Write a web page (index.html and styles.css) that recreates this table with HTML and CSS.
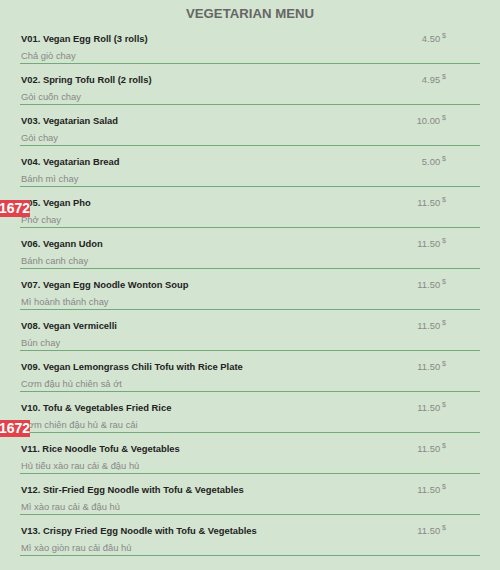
FILE: index.html
```html
<!DOCTYPE html>
<html>
<head>
<meta charset="utf-8">
<link rel="stylesheet" href="styles.css">
</head>
<body>
<div class="menu">
  <h2 class="title">VEGETARIAN MENU</h2>
  <ul class="list">
    <li class="item"><div class="info"><div class="name">V01. Vegan Egg Roll (3 rolls)</div><div class="sub">Chả giò chay</div></div><div class="price">4.50<sup>$</sup></div></li>
    <li class="item"><div class="info"><div class="name">V02. Spring Tofu Roll (2 rolls)</div><div class="sub">Gỏi cuốn chay</div></div><div class="price">4.95<sup>$</sup></div></li>
    <li class="item"><div class="info"><div class="name">V03. Vegatarian Salad</div><div class="sub">Gỏi chay</div></div><div class="price">10.00<sup>$</sup></div></li>
    <li class="item"><div class="info"><div class="name">V04. Vegatarian Bread</div><div class="sub">Bánh mì chay</div></div><div class="price">5.00<sup>$</sup></div></li>
    <li class="item"><div class="info"><div class="name">V05. Vegan Pho</div><div class="sub">Phở chay</div></div><div class="price">11.50<sup>$</sup></div><span class="badge">1672</span></li>
    <li class="item"><div class="info"><div class="name">V06. Vegann Udon</div><div class="sub">Bánh canh chay</div></div><div class="price">11.50<sup>$</sup></div></li>
    <li class="item"><div class="info"><div class="name">V07. Vegan Egg Noodle Wonton Soup</div><div class="sub">Mì hoành thánh chay</div></div><div class="price">11.50<sup>$</sup></div></li>
    <li class="item"><div class="info"><div class="name">V08. Vegan Vermicelli</div><div class="sub">Bún chay</div></div><div class="price">11.50<sup>$</sup></div></li>
    <li class="item"><div class="info"><div class="name">V09. Vegan Lemongrass Chili Tofu with Rice Plate</div><div class="sub">Cơm đậu hủ chiên sả ớt</div></div><div class="price">11.50<sup>$</sup></div></li>
    <li class="item"><div class="info"><div class="name">V10. Tofu &amp; Vegetables Fried Rice</div><div class="sub">Cơm chiên đậu hủ &amp; rau cải</div></div><div class="price">11.50<sup>$</sup></div><span class="badge badge-low">1672</span></li>
    <li class="item"><div class="info"><div class="name">V11. Rice Noodle Tofu &amp; Vegetables</div><div class="sub">Hủ tiếu xào rau cải &amp; đậu hủ</div></div><div class="price">11.50<sup>$</sup></div></li>
    <li class="item"><div class="info"><div class="name">V12. Stir-Fried Egg Noodle with Tofu &amp; Vegetables</div><div class="sub">Mì xào rau cải &amp; đậu hủ</div></div><div class="price">11.50<sup>$</sup></div></li>
    <li class="item"><div class="info"><div class="name">V13. Crispy Fried Egg Noodle with Tofu &amp; Vegetables</div><div class="sub">Mì xào giòn rau cải đâu hủ</div></div><div class="price">11.50<sup>$</sup></div></li>
  </ul>
</div>
</body>
</html>
```
FILE: styles.css
```css
html, body {
  margin: 0;
  padding: 0;
  background: #d3e4d0;
}
body {
  font-family: "Liberation Sans", Arial, sans-serif;
  width: 500px;
  height: 570px;
  overflow: hidden;
}
.menu {
  padding: 4px 20px 0 20px;
}
.title {
  margin: 0;
  font-size: 13.2px;
  line-height: 19px;
  font-weight: bold;
  color: #666;
  text-align: center;
}
.list {
  list-style: none;
  margin: 0;
  padding: 0;
}
.item {
  position: relative;
  display: flex;
  justify-content: space-between;
  padding-top: 9px;
  border-bottom: 1px solid #74a97c;
}
.info {
  padding-left: 1px;
}
.name {
  font-size: 9.4px;
  line-height: 14px;
  font-weight: bold;
  color: #222;
}
.sub {
  margin-top: 3px;
  font-size: 9.4px;
  line-height: 14px;
  color: #888;
}
.price {
  margin-right: 34px;
  font-size: 9.4px;
  line-height: 14px;
  color: #888;
}
.price sup {
  font-size: 7px;
  margin-left: 2px;
  vertical-align: 4px;
  line-height: 0;
}
.badge {
  position: absolute;
  left: -21px;
  top: 13px;
  width: 31px;
  overflow: hidden;
  background: #e2434b;
  color: #fff;
  font-size: 14px;
  font-weight: bold;
  line-height: 17px;
  white-space: nowrap;
}
.badge-low {
  top: 28px;
}
```
